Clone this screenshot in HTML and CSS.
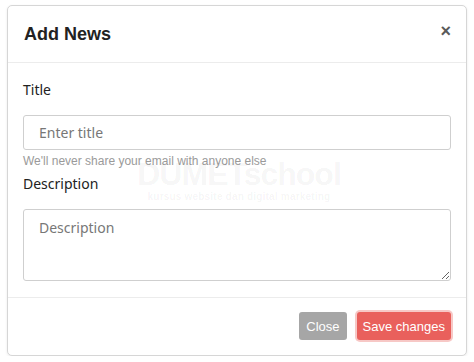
FILE: index.html
```html
<!DOCTYPE html>
<html lang="en">
<head>
  <meta charset="UTF-8">
  <meta name="viewport" content="width=device-width, initial-scale=1.0">
  <title>Add News</title>
  <link rel="stylesheet" href="styles.css">
</head>
<body>
  <div class="modal">
    <div class="modal-header">
      <h4 class="modal-title">Add News</h4>
      <button type="button" class="close">&times;</button>
    </div>

    <form class="modal-body">
      <label for="title">Title</label>
      <input type="text" id="title" placeholder="Enter title">
      <small class="help">We'll never share your email with anyone else</small>

      <label for="description">Description</label>
      <textarea id="description" rows="3" placeholder="Description"></textarea>
    </form>

    <div class="modal-footer">
      <button type="button" class="btn btn-close">Close</button>
      <button type="button" class="btn btn-save">Save changes</button>
    </div>

    <div class="watermark">
      <span class="wm-big">DUMETschool</span>
      <span class="wm-small">kursus website dan digital marketing</span>
    </div>
  </div>
</body>
</html>
```

FILE: styles.css
```css
body {
  margin: 0;
  padding: 5px 7px 0 7px;
  font-family: "Noto Sans", Arial, sans-serif;
  background: #fff;
}

.modal {
  position: relative;
  border: 1px solid #d6d6d6;
  border-radius: 5px;
  box-shadow: 0 1px 3px rgba(0, 0, 0, 0.08);
  background: #fff;
}

.modal-header {
  display: flex;
  align-items: center;
  justify-content: space-between;
  padding: 15px 15px 15px 16px;
  border-bottom: 1px solid #ececec;
}

.modal-title {
  margin: 0;
  font-family: "Liberation Sans", Arial, sans-serif;
  font-size: 18px;
  line-height: 26px;
  font-weight: bold;
  color: #222;
}

.close {
  border: none;
  background: none;
  padding: 0;
  margin-top: -6px;
  font-family: "Liberation Sans", Arial, sans-serif;
  font-size: 18px;
  font-weight: bold;
  line-height: 1;
  color: #5a5a5a;
  cursor: pointer;
}

.modal-body {
  display: flex;
  flex-direction: column;
  padding: 16px 15px 16px 15px;
}

label {
  font-size: 14px;
  line-height: 22px;
  color: #222;
  margin-bottom: 14px;
}

input,
textarea {
  font-family: "Noto Sans", Arial, sans-serif;
  font-size: 14px;
  color: #333;
  border: 1px solid #cfcfcf;
  border-radius: 3px;
  padding: 0 15px;
  margin: 0;
}

input {
  height: 35px;
  box-sizing: border-box;
}

textarea {
  height: 72px;
  box-sizing: border-box;
  padding-top: 8px;
  resize: vertical;
}

input::placeholder,
textarea::placeholder {
  color: #777;
}

.help {
  font-family: "Liberation Sans", Arial, sans-serif;
  font-size: 12px;
  line-height: 16px;
  color: #9a9a9a;
  margin: 3px 0 4px;
}

.modal-footer {
  display: flex;
  justify-content: flex-end;
  gap: 10px;
  padding: 14px 15px 15px;
  border-top: 1px solid #ececec;
}

.btn {
  font-family: "Liberation Sans", Arial, sans-serif;
  font-size: 13px;
  color: #fff;
  border: none;
  border-radius: 3px;
  height: 28px;
  padding: 0 7px;
  cursor: pointer;
}

.btn-close {
  background-color: #a6a6a6;
}

.btn-save {
  background-color: #e9605c;
  padding: 0 6px;
  box-shadow: 0 0 0 2px rgba(233, 96, 92, 0.35);
}

.watermark {
  position: absolute;
  left: 133px;
  top: 151px;
  width: 196px;
  display: flex;
  flex-direction: column;
  align-items: center;
  white-space: nowrap;
  pointer-events: none;
  color: rgba(0, 0, 0, 0.05);
  font-family: "Liberation Sans", Arial, sans-serif;
}

.wm-big {
  font-size: 32px;
  line-height: 34px;
  font-weight: bold;
  letter-spacing: -1px;
}

.wm-small {
  font-size: 10px;
  line-height: 12px;
  font-weight: bold;
  letter-spacing: 0.2px;
}
```
